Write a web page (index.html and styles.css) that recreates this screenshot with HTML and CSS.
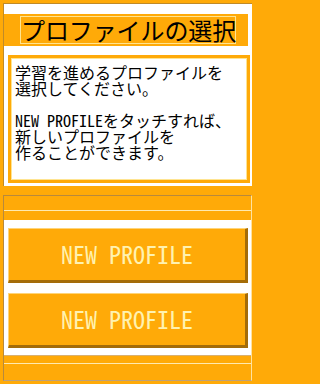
FILE: index.html
```html
<!DOCTYPE html>
<html lang="ja">
<head>
<meta charset="utf-8">
<link rel="stylesheet" href="styles.css">
</head>
<body>
<div class="screen top">
  <div class="top-inner">
    <div class="title-band"><div class="title">プロファイルの選択</div></div>
    <div class="info">
      <p>学習を進めるプロファイルを<br>選択してください。<br><br>NEW PROFILEをタッチすれば、<br>新しいプロファイルを<br>作ることができます。</p>
    </div>
  </div>
</div>
<div class="screen bottom">
  <div class="panel">
    <div class="band band-top"></div>
    <div class="list">
      <div class="btn">NEW PROFILE</div>
      <div class="btn">NEW PROFILE</div>
    </div>
    <div class="band band-bottom"></div>
  </div>
</div>
</body>
</html>
```
FILE: styles.css
```css
* { box-sizing: border-box; }
html, body { margin: 0; padding: 0; }
body {
  width: 256px;
  height: 384px;
  background: #ffaa08;
  font-family: "Noto Sans CJK JP", "Noto Sans", sans-serif;
  font-feature-settings: "hwid";
  color: #000;
  overflow: hidden;
}
.screen { height: 192px; }
.top { padding: 3px 4px 0 3px; }
.top-inner {
  height: 183px;
  background: #fff;
  border-left: 1px solid #c08a28;
  border-top: 1px solid #c08a28;
  padding-top: 10px;
}
.title-band {
  background: #ffaa08;
  height: 32px;
  width: 244px;
  padding: 2px 0 0 16px;
}
.title {
  width: 216px;
  height: 28px;
  border: 1px solid #ffe490;
  font-size: 24px;
  line-height: 26px;
  letter-spacing: -0.1px;
  text-align: center;
  white-space: nowrap;
}
.info {
  margin: 9px 0 0 4px;
  width: 242px;
  height: 128px;
  border: 3px solid #ffaa08;
  box-shadow: inset 0 0 0 1px #ffe490;
  padding: 6px 0 0 4px;
}
.info p {
  margin: 0;
  font-size: 16px;
  line-height: 16px;
  white-space: nowrap;
}
.bottom { padding: 3px 4px 3px 3px; }
.panel {
  height: 186px;
  border-left: 1px solid #b8893c;
  border-top: 1px solid #b8893c;
  border-bottom: 1px solid #b8a080;
  border-right: 1px solid #ffe2a0;
  display: flex;
  flex-direction: column;
}
.band { background: #ffaa08; }
.band-top {
  height: 24px;
  border-bottom: 9px solid #ffaa08;
  box-shadow: inset 0 -10px 0 -9px #ffeab0;
  background: linear-gradient(#ffaa08 14px, #ffeab0 14px, #ffeab0 15px, #ffaa08 15px);
}
.band-bottom {
  height: 25px;
  background: linear-gradient(#d8b070 1px, #ffaa08 1px, #ffaa08 8px, #ffeab0 8px, #ffeab0 9px, #ffaa08 9px);
}
.list {
  background: #fff;
  height: 135px;
  padding: 8px 0 0 4px;
  display: flex;
  flex-direction: column;
  gap: 10px;
}
.btn {
  width: 240px;
  height: 55px;
  background: #ffaa08;
  border-top: 1px solid #ffd478;
  border-left: 1px solid #ffd478;
  border-right: 3px solid #a46c08;
  border-bottom: 3px solid #a46c08;
  color: #fff2b0;
  font-size: 24px;
  line-height: 50px;
  text-align: center;
  white-space: nowrap;
}
```
